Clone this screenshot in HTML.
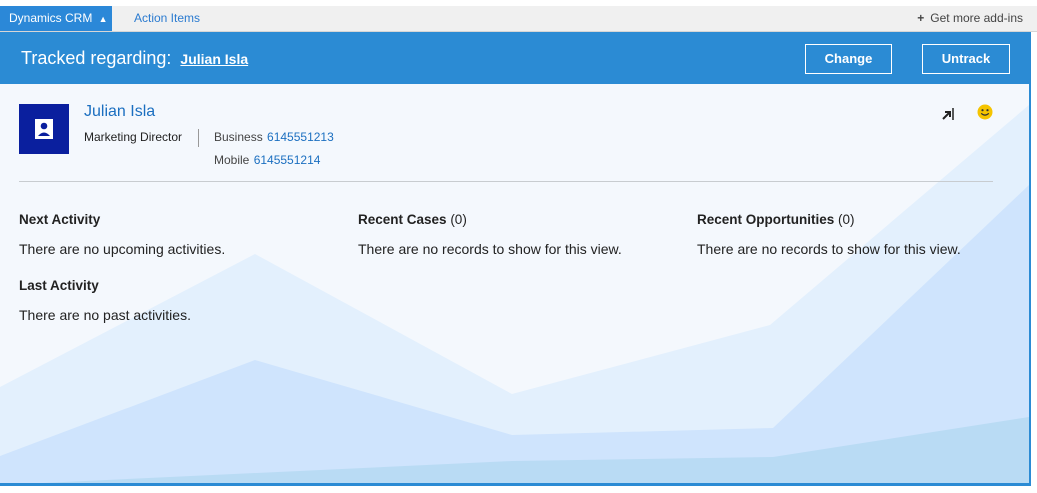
<!DOCTYPE html>
<html><head><meta charset="utf-8"><style>
*{margin:0;padding:0;box-sizing:border-box}
body{width:1037px;height:493px;background:#fff;font-family:"Segoe UI","Liberation Sans",sans-serif;position:relative;overflow:hidden;color:#222}
.topbar{position:absolute;top:6px;left:0;width:1037px;height:26px;background:#f0f0f0;border-bottom:1px solid #d6d6d6}
.tab1{position:absolute;left:0;top:0;width:112px;height:25px;background:#2b88d8;color:#fff;font-size:12px;line-height:24px;padding-left:9px}
.tab2{position:absolute;left:134px;top:0;color:#2b7bd0;font-size:12px;line-height:24px}
.addins{position:absolute;right:14px;top:0;color:#444;font-size:12px;line-height:24px}
.hdr{position:absolute;top:32px;left:0;width:1031px;height:52px;background:#2b8bd4;color:#fff}
.hdr .t{position:absolute;left:21px;top:16px;font-size:18px}
.hdr .t u{font-weight:bold;font-size:14px;margin-left:4px}
.btn{position:absolute;top:12px;height:30px;border:1px solid #fff;color:#fff;font-weight:bold;font-size:13px;text-align:center;line-height:28px}
.content{position:absolute;top:84px;left:0;width:1031px;height:402px;background:#f4f8fd;border-right:2px solid #2b8bd4;border-bottom:3px solid #2b8bd4;overflow:hidden}
.abs{position:absolute}
.lnk{color:#1b6fc0}
.h{font-weight:bold;font-size:13.5px}
.p{font-size:14px}
</style></head><body>
<div class="topbar">
<div class="tab1">Dynamics CRM <span style="font-size:9px;margin-left:3px">&#9650;</span></div>
<div class="tab2">Action Items</div>
<div class="addins"><span style="font-weight:bold;margin-right:6px">+</span>Get more add-ins</div>
</div>
<div class="hdr">
<div class="t">Tracked regarding: <u>Julian Isla</u></div>
<div class="btn" style="left:805px;width:87px">Change</div>
<div class="btn" style="left:922px;width:88px">Untrack</div>
</div>
<div class="content">
<svg class="abs" style="left:0;top:0" width="1029" height="399" viewBox="0 84 1029 399">
<polygon points="0,387 255,254 512,394 770,325 1029,105 1029,483 0,483" fill="#e3f0fd"/>
<polygon points="0,456 255,360 512,435 773,428 1029,185 1029,483 0,483" fill="#cfe4fd"/>
<polygon points="0,485 512,461 773,457 1029,417 1029,483 0,483" fill="#b9dbf4"/>
</svg>
<div class="abs" style="left:19px;top:20px;width:50px;height:50px;background:#0a1f9e">
<svg width="50" height="50"><rect x="16" y="15" width="18" height="20" fill="#fff"/><circle cx="25" cy="22" r="3.3" fill="#0a1f9e"/><path d="M19 32 q6-7 12 0z" fill="#0a1f9e"/></svg></div>
<div class="abs lnk" style="left:84px;top:19px;font-size:16px">Julian Isla</div>
<div class="abs" style="left:84px;top:46px;font-size:12px">Marketing Director</div>
<div class="abs" style="left:198px;top:45px;width:1px;height:18px;background:#999"></div>
<div class="abs" style="left:214px;top:46px;font-size:12px;color:#444">Business <span class="lnk" style="margin-left:1px">6145551213</span></div>
<div class="abs" style="left:214px;top:69px;font-size:12px;color:#444">Mobile <span class="lnk" style="margin-left:1px">6145551214</span></div>
<svg class="abs" style="left:941px;top:23px" width="14" height="14"><path d="M2 12 L9 5 M4 5 H9 V10" stroke="#222" stroke-width="2" fill="none"/><path d="M12 1 V13" stroke="#222" stroke-width="1.5"/></svg>
<svg class="abs" style="left:977px;top:20px" width="16" height="16"><circle cx="8" cy="8" r="7.5" fill="#f5c400"/><circle cx="5.5" cy="6.2" r="1.1" fill="#333"/><circle cx="10.5" cy="6.2" r="1.1" fill="#333"/><path d="M4.2 9.3 Q8 13 11.8 9.3" stroke="#333" stroke-width="1.2" fill="none"/></svg>
<div class="abs" style="left:19px;top:97px;width:974px;height:1px;background:#c8ccd0"></div>
<div class="abs h" style="left:19px;top:128px">Next Activity</div>
<div class="abs p" style="left:19px;top:157px">There are no upcoming activities.</div>
<div class="abs h" style="left:19px;top:194px">Last Activity</div>
<div class="abs p" style="left:19px;top:223px">There are no past activities.</div>
<div class="abs h" style="left:358px;top:128px">Recent Cases <span style="font-weight:normal">(0)</span></div>
<div class="abs p" style="left:358px;top:157px">There are no records to show for this view.</div>
<div class="abs h" style="left:697px;top:128px">Recent Opportunities <span style="font-weight:normal">(0)</span></div>
<div class="abs p" style="left:697px;top:157px">There are no records to show for this view.</div>
</div>
</body></html>
